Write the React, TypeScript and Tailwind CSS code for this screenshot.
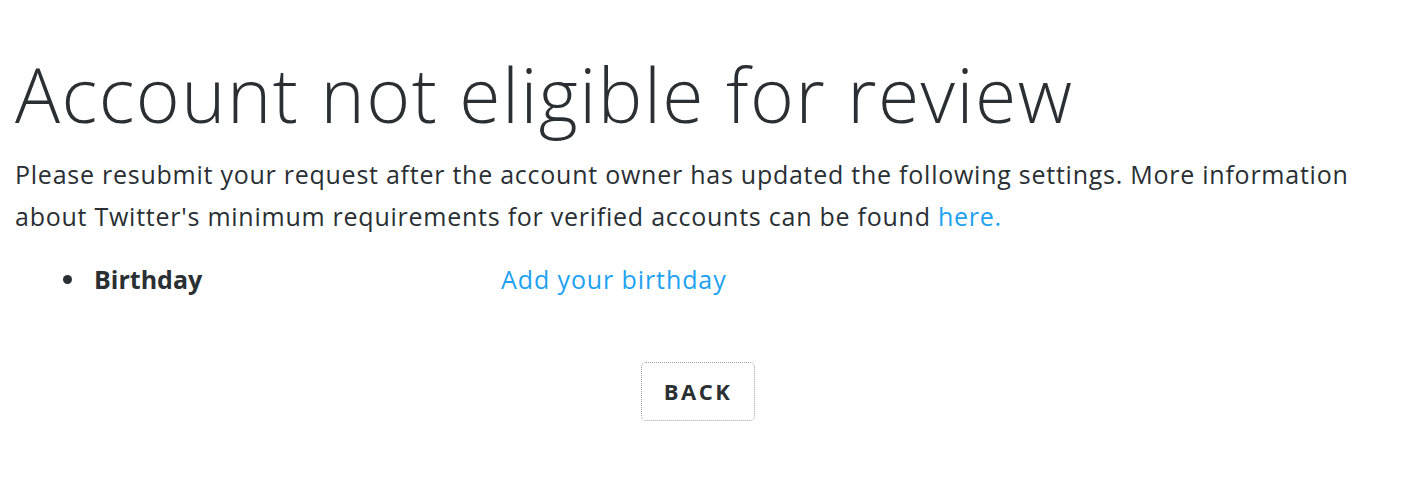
export default function App() {
  return (
    <div className="w-[1428px] h-[496px] bg-white text-[#292f33]" style={{ fontFamily: '"Open Sans", Lato, sans-serif' }}>
      <div className="w-[1366px] ml-[15px] pt-[48px]">
        <h1 className="text-[75px] leading-[92px] font-light tracking-[1.5px]">Account not eligible for review</h1>
        <p className="mt-[13px] text-[25px] leading-[42px] tracking-[0.75px]">
          Please resubmit your request after the account owner has updated the following settings. More information
          <br />
          about Twitter's minimum requirements for verified accounts can be found{' '}
          <a className="text-[#1da1f2]" href="#">here.</a>
        </p>
        <div className="mt-[21px] flex items-center text-[25px] leading-[42px]">
          <span className="ml-[48px] w-[9px] h-[9px] rounded-full bg-[#292f33]" />
          <span className="ml-[22px] w-[407px] font-bold">Birthday</span>
          <a className="text-[#1da1f2] tracking-[0.9px]" href="#">Add your birthday</a>
        </div>
        <div className="mt-[62px] flex justify-center">
          <button className="w-[114px] h-[59px] rounded-[5px] border border-dotted border-[#9aa0a6] text-[22px] font-bold tracking-[2.5px]">
            BACK
          </button>
        </div>
      </div>
    </div>
  );
}
